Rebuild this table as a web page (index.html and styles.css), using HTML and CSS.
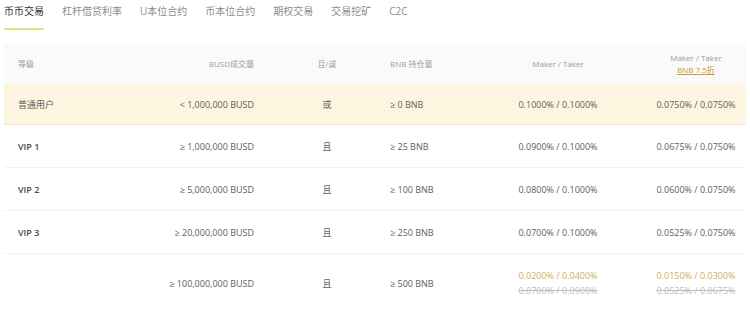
FILE: index.html
```html
<!DOCTYPE html>
<html lang="zh">
<head>
<meta charset="utf-8">
<link rel="stylesheet" href="styles.css">
</head>
<body>
<nav class="tabs">
  <span class="tab active">币币交易</span>
  <span class="tab">杠杆借贷利率</span>
  <span class="tab">U本位合约</span>
  <span class="tab">币本位合约</span>
  <span class="tab">期权交易</span>
  <span class="tab">交易挖矿</span>
  <span class="tab">C2C</span>
</nav>
<div class="table">
  <div class="row head">
    <div class="c1">等级</div>
    <div class="c2">BUSD成交量</div>
    <div class="c3">且/或</div>
    <div class="c4">BNB 持仓量</div>
    <div class="c5">Maker / Taker</div>
    <div class="c6 stack"><span>Maker / Taker</span><span class="link">BNB 7.5折</span></div>
  </div>
  <div class="row hl">
    <div class="c1">普通用户</div>
    <div class="c2">&lt; 1,000,000 BUSD</div>
    <div class="c3">或</div>
    <div class="c4">≥ 0 BNB</div>
    <div class="c5">0.1000% / 0.1000%</div>
    <div class="c6">0.0750% / 0.0750%</div>
  </div>
  <div class="row">
    <div class="c1 vip">VIP 1</div>
    <div class="c2">≥ 1,000,000 BUSD</div>
    <div class="c3">且</div>
    <div class="c4">≥ 25 BNB</div>
    <div class="c5">0.0900% / 0.1000%</div>
    <div class="c6">0.0675% / 0.0750%</div>
  </div>
  <div class="row">
    <div class="c1 vip">VIP 2</div>
    <div class="c2">≥ 5,000,000 BUSD</div>
    <div class="c3">且</div>
    <div class="c4">≥ 100 BNB</div>
    <div class="c5">0.0800% / 0.1000%</div>
    <div class="c6">0.0600% / 0.0750%</div>
  </div>
  <div class="row">
    <div class="c1 vip">VIP 3</div>
    <div class="c2">≥ 20,000,000 BUSD</div>
    <div class="c3">且</div>
    <div class="c4">≥ 250 BNB</div>
    <div class="c5">0.0700% / 0.1000%</div>
    <div class="c6">0.0525% / 0.0750%</div>
  </div>
  <div class="row tall">
    <div class="c1 vip"></div>
    <div class="c2">≥ 100,000,000 BUSD</div>
    <div class="c3">且</div>
    <div class="c4">≥ 500 BNB</div>
    <div class="c5 stack"><span class="gold">0.0200% / 0.0400%</span><span class="old">0.0700% / 0.0900%</span></div>
    <div class="c6 stack"><span class="gold">0.0150% / 0.0300%</span><span class="old">0.0525% / 0.0675%</span></div>
  </div>
</div>
</body>
</html>
```
FILE: styles.css
```css
* { box-sizing: border-box; }
body {
  margin: 0;
  background: #fff;
  font-family: "Open Sans", "Noto Sans CJK SC", sans-serif;
  color: #555;
  overflow: hidden;
}
.tabs {
  display: flex;
  gap: 18px;
  padding: 4px 4px 0;
  height: 43px;
  align-items: flex-start;
}
.tab {
  font-size: 10px;
  line-height: 14px;
  color: #8c8c8c;
  padding-bottom: 10px;
  border-bottom: 2px solid transparent;
}
.tab.active {
  color: #333;
  border-bottom-color: #e4df8c;
}
.table {
  margin: 0 4px;
}
.row {
  display: grid;
  grid-template-columns: 146px 120px 114px 86px 176px 100px;
  height: 43px;
  align-items: center;
  font-size: 9px;
  color: #5e5e5e;
  border-bottom: 1px solid #f2f2f2;
}
.row.head {
  height: 41px;
  background: #fafafa;
  font-size: 8px;
  color: #9a9a9a;
  border-bottom: none;
}
.row.hl {
  height: 41px;
  background: #fdf5df;
  border-bottom: 1px solid #f3e6c4;
}
.row.tall {
  height: 58px;
  border-bottom: none;
}
.c1 { padding-left: 14px; }
.c2 { text-align: right; padding-right: 16px; }
.c3 { text-align: center; }
.c4 { padding-left: 6px; }
.c5, .c6 { text-align: center; }
.vip { color: #4a4a4a; font-weight: 600; }
.stack {
  display: flex;
  flex-direction: column;
  align-items: center;
  gap: 2px;
}
.head .stack { gap: 1px; }
.link {
  color: #c99a2e;
  text-decoration: underline;
}
.gold { color: #cfae5e; }
.old {
  color: #bdbdbd;
  text-decoration: line-through;
}
```
